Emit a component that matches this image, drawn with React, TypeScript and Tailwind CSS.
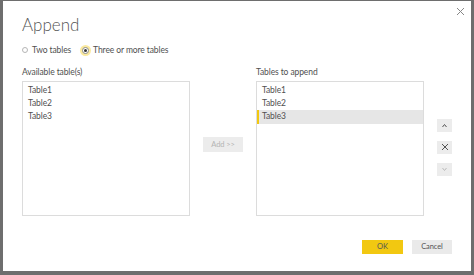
const font = { fontFamily: "Lato, 'Liberation Sans', sans-serif" };

const Radio = ({ checked, label }: { checked?: boolean; label: string }) => (
  <label className="flex items-center gap-[4px]">
    <span
      className={
        checked
          ? "flex h-[7px] w-[7px] items-center justify-center rounded-full border border-[#8a8a8a] bg-white shadow-[0_0_0_2px_#fbeaa0]"
          : "h-[6px] w-[6px] rounded-full border border-[#b5b5b5] bg-white"
      }
    >
      {checked && <span className="h-[3px] w-[3px] rounded-full bg-[#333]" />}
    </span>
    <span>{label}</span>
  </label>
);

const ListBox = ({ items, selected }: { items: string[]; selected?: string }) => (
  <div className="h-[135px] w-[168px] border border-[#dcdcdc] bg-white pt-[2px]">
    {items.map((t) => (
      <div
        key={t}
        className={
          t === selected
            ? "flex h-[14px] items-center border-l-2 border-[#f2c811] bg-[#e6e6e6] pl-[3px]"
            : "flex h-[13px] items-center pl-[5px]"
        }
      >
        {t}
      </div>
    ))}
  </div>
);

export default function App() {
  return (
    <div className="h-[275px] w-[474px] bg-[#6e6e6e] pb-[4px] pl-[3px] pr-[3px] pt-px" style={font}>
      <div className="relative flex h-full flex-col bg-white px-[19px] text-[8.5px] tracking-[-0.1px] text-[#505050]">
        <button className="absolute right-[6px] top-[6px] text-[#888]">
          <svg width="9" height="9" viewBox="0 0 9 9">
            <path d="M1 1L8 8M8 1L1 8" stroke="currentColor" strokeWidth="1" />
          </svg>
        </button>

        <h1 className="mt-[13px] text-[17px] font-light leading-[22px] tracking-normal text-[#555]">Append</h1>

        <div className="mt-[8px] flex items-center gap-[11px]">
          <Radio label="Two tables" />
          <Radio checked label="Three or more tables" />
        </div>

        <div className="mt-[10px] flex gap-[13px]">
          <div className="flex flex-col">
            <span className="mb-[4px] leading-[10px]">Available table(s)</span>
            <ListBox items={["Table1", "Table2", "Table3"]} />
          </div>
          <div className="pt-[70px]">
            <button className="h-[15px] w-[40px] bg-[#ececec] text-[7.5px] text-[#b4b4b4]">Add &gt;&gt;</button>
          </div>
          <div className="flex flex-col">
            <span className="mb-[4px] leading-[10px]">Tables to append</span>
            <ListBox items={["Table1", "Table2", "Table3"]} selected="Table3" />
          </div>
          <div className="flex flex-col gap-[9px] pt-[52px]">
            <button className="flex h-[13px] w-[15px] items-center justify-center bg-[#ececec] text-[#555]">
              <svg width="7" height="5" viewBox="0 0 7 5">
                <path d="M1.5 4L3.5 1.5L5.5 4" stroke="currentColor" fill="none" strokeWidth="1" />
              </svg>
            </button>
            <button className="flex h-[13px] w-[15px] items-center justify-center bg-[#ececec] text-[#555]">
              <svg width="8" height="8" viewBox="0 0 8 8">
                <path d="M1 1L7 7M7 1L1 7" stroke="currentColor" strokeWidth="1" />
              </svg>
            </button>
            <button className="flex h-[13px] w-[15px] items-center justify-center bg-[#ececec] text-[#bbb]">
              <svg width="7" height="5" viewBox="0 0 7 5">
                <path d="M1.5 1L3.5 3.5L5.5 1" stroke="currentColor" fill="none" strokeWidth="1" />
              </svg>
            </button>
          </div>
        </div>

        <div className="mt-auto mb-[17px] flex justify-end gap-[9px]">
          <button className="h-[14px] w-[41px] bg-[#f2c811] text-[7.5px] text-[#555]">OK</button>
          <button className="h-[14px] w-[40px] bg-[#eaeaea] text-[7.5px] text-[#555]">Cancel</button>
        </div>
      </div>
    </div>
  );
}
